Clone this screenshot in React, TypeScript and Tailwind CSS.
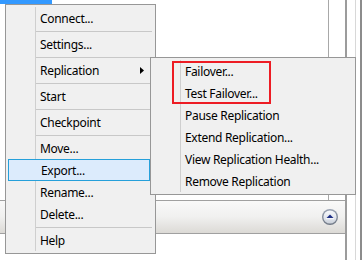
import React from 'react'

type Item = { label: string; sep?: boolean; sub?: boolean; active?: boolean }

const mainItems: Item[] = [
  { label: 'Connect...', sep: true },
  { label: 'Settings...', sep: true },
  { label: 'Replication', sub: true, sep: true },
  { label: 'Start', sep: true },
  { label: 'Checkpoint', sep: true },
  { label: 'Move...' },
  { label: 'Export...', active: true },
  { label: 'Rename...' },
  { label: 'Delete...', sep: true },
  { label: 'Help' },
]

const subItems = [
  'Failover...',
  'Test Failover...',
  'Pause Replication',
  'Extend Replication...',
  'View Replication Health...',
  'Remove Replication',
]

const font = { fontFamily: '"Segoe UI", "Noto Sans", sans-serif' }

const MenuRow = ({ item }: { item: Item }) => (
  <>
    <div
      className={
        'flex h-[22px] items-center justify-between pl-[32px] pr-[9px] text-[12px] tracking-[-0.3px] text-black ' +
        (item.active ? 'mr-[3px] border border-[#26a0da] bg-[#dcebfc] pl-[31px]' : '')
      }
    >
      <span className="pt-px">{item.label}</span>
      {item.sub && (
        <svg width="4" height="7" viewBox="0 0 4 7">
          <path d="M0 0 L4 3.5 L0 7 Z" fill="#000" />
        </svg>
      )}
    </div>
    {item.sep && (
      <div className="flex h-[4px] items-center pl-[28px] pr-[1px]">
        <div className="h-px w-full bg-[#c8c8c8]" />
      </div>
    )}
  </>
)

const UpButton = () => (
  <svg width="18" height="18" viewBox="0 0 18 18">
    <defs>
      <linearGradient id="ring" x1="0" y1="0" x2="0" y2="1">
        <stop offset="0" stopColor="#9aa4b4" />
        <stop offset="1" stopColor="#6f7784" />
      </linearGradient>
      <linearGradient id="face" x1="0" y1="0" x2="0" y2="1">
        <stop offset="0" stopColor="#f6f8fb" />
        <stop offset="0.55" stopColor="#e3e7ee" />
        <stop offset="1" stopColor="#c9cfd8" />
      </linearGradient>
    </defs>
    <circle cx="9" cy="9" r="8" fill="url(#ring)" />
    <circle cx="9" cy="9" r="6.6" fill="url(#face)" />
    <path d="M5.5 10 L9 6.5 L12.5 10 Z" fill="#1d2f86" />
    <rect x="5" y="10.2" width="8" height="1" fill="#ffffff" opacity="0.8" />
  </svg>
)

export default function App() {
  return (
    <div className="relative flex h-[260px] w-[362px] overflow-hidden bg-white" style={font}>
      {/* background window */}
      <div className="flex w-[347px] flex-col border-r-2 border-[#9c9c9c]">
        <div className="flex h-[200px]">
          <div className="w-[329px] border-r border-[#a8a8a8]">
            <div className="h-[4px] w-[52px] bg-[#3399ff]" />
          </div>
        </div>
        <div className="flex h-[34px] items-center justify-end border-y border-[#a0a0a0] bg-gradient-to-b from-[#f9f9f9] via-[#f0f0ef] to-[#dcdad6] pr-[6px]">
          <UpButton />
        </div>
        <div className="flex-1 bg-white" />
      </div>
      <div className="w-[8px] bg-white" />
      <div className="w-px bg-[#d8d8d8]" />
      <div className="w-[4px] bg-white" />
      <div className="w-[2px] bg-[#8c8c8c]" />

      {/* context menu */}
      <div className="absolute left-[5px] top-[4px] h-[250px] w-[151px] border border-[#979797] bg-[#f0f0f0] p-[2px]">
        <div className="absolute bottom-[2px] left-[29px] top-[2px] w-px bg-[#cfcfcf]" />
        <div className="relative">
          {mainItems.map(it => (
            <MenuRow key={it.label} item={it} />
          ))}
        </div>
      </div>

      {/* submenu */}
      <div className="absolute left-[150px] top-[57px] h-[138px] w-[206px] border border-[#979797] bg-[#f0f0f0] p-[2px]">
        <div className="absolute bottom-[2px] left-[29px] top-[2px] w-px bg-[#cfcfcf]" />
        <div className="relative">
          {subItems.map(s => (
            <div key={s} className="flex h-[22px] items-center pl-[32px] pt-px text-[12px] tracking-[-0.3px] text-black">
              {s}
            </div>
          ))}
        </div>
      </div>

      {/* highlight box */}
      <div className="absolute left-[172px] top-[61px] h-[43px] w-[99px] border-2 border-[#ed1c24]" />
    </div>
  )
}
